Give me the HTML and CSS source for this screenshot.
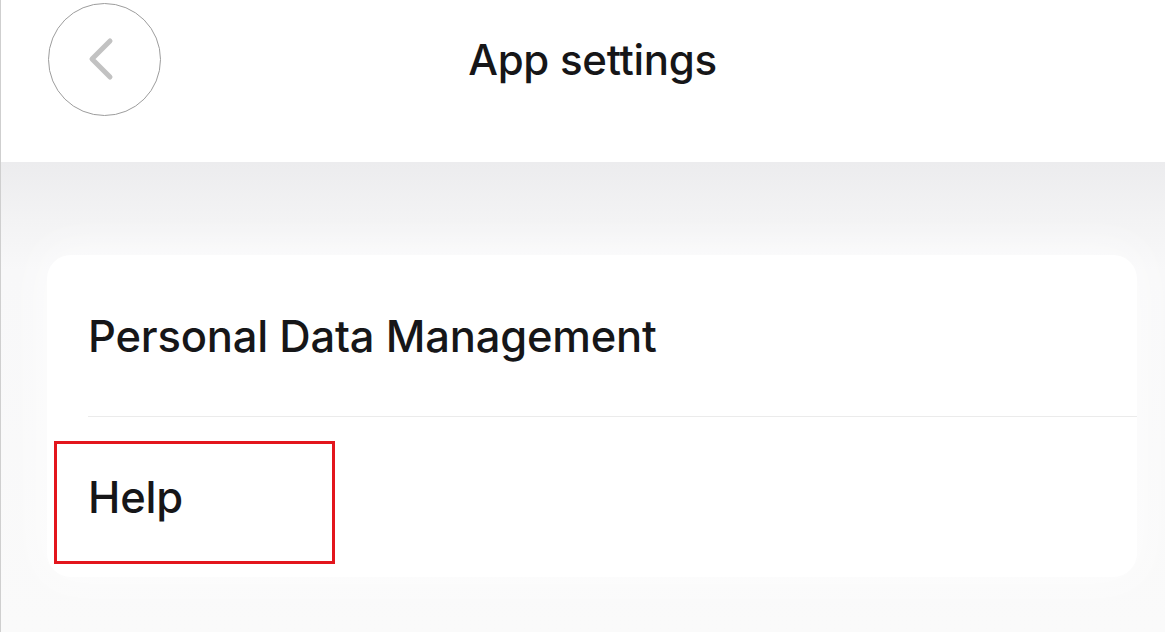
FILE: index.html
```html
<!DOCTYPE html>
<html lang="en">
<head>
    <meta charset="UTF-8">
    <meta name="viewport" content="width=device-width, initial-scale=1.0">
    <title>App settings</title>
    <link rel="stylesheet" href="styles.css">
</head>
<body>
    <div class="screen">
        <header class="topbar">
            <button class="back-btn" aria-label="Back">
                <svg width="40" height="48" viewBox="0 0 40 48">
                    <path d="M26 5 L8 23 L26 41" fill="none" stroke="#c2c2c2" stroke-width="5" stroke-linecap="round" stroke-linejoin="round"/>
                </svg>
            </button>
            <h1 class="title">App settings</h1>
            <div></div>
        </header>

        <main class="content">
            <div class="card">
                <div class="row">Personal Data Management</div>
                <div class="row">Help</div>
                <div class="highlight"></div>
            </div>
        </main>
    </div>
</body>
</html>
```

FILE: styles.css
```css
* {
    box-sizing: border-box;
}
body {
    margin: 0;
    font-family: Inter, "Noto Sans", sans-serif;
    color: #161618;
    background: #fafafa;
}
.screen {
    width: 1165px;
    height: 632px;
    overflow: hidden;
    border-left: 1px solid #cfcfcf;
    background: linear-gradient(to bottom, #ffffff 0, #ffffff 162px, #ececee 162px, #f3f3f4 220px, #f8f8f9 270px, #fafafa 100%);
}
.topbar {
    height: 162px;
    display: grid;
    grid-template-columns: 161px 1fr 161px;
    align-items: start;
}
.back-btn {
    margin: 3px 0 0 47px;
    width: 113px;
    height: 113px;
    border-radius: 50%;
    border: 1px solid #9d9d9d;
    background: #fff;
    display: flex;
    align-items: center;
    justify-content: center;
    padding: 0 1px 0 0;
    cursor: pointer;
}
.title {
    margin: 0;
    padding: 35px 0 0 19px;
    text-align: center;
    font-size: 42px;
    font-weight: 500;
    letter-spacing: -0.3px;
    line-height: 50px;
}
.content {
    padding: 93px 28px 0 46px;
}
.card {
    position: relative;
    background: #fff;
    border-radius: 24px;
    box-shadow: 0 0 40px 10px rgba(255, 255, 255, 0.6);
}
.row {
    height: 161px;
    margin-left: 41px;
    display: flex;
    align-items: center;
    font-size: 43.5px;
    font-weight: 500;
    letter-spacing: -0.2px;
}
.row + .row {
    border-top: 1px solid #ebebeb;
}
.highlight {
    position: absolute;
    left: 7px;
    top: 186px;
    width: 281px;
    height: 123px;
    border: 3px solid #e3161d;
}
```
